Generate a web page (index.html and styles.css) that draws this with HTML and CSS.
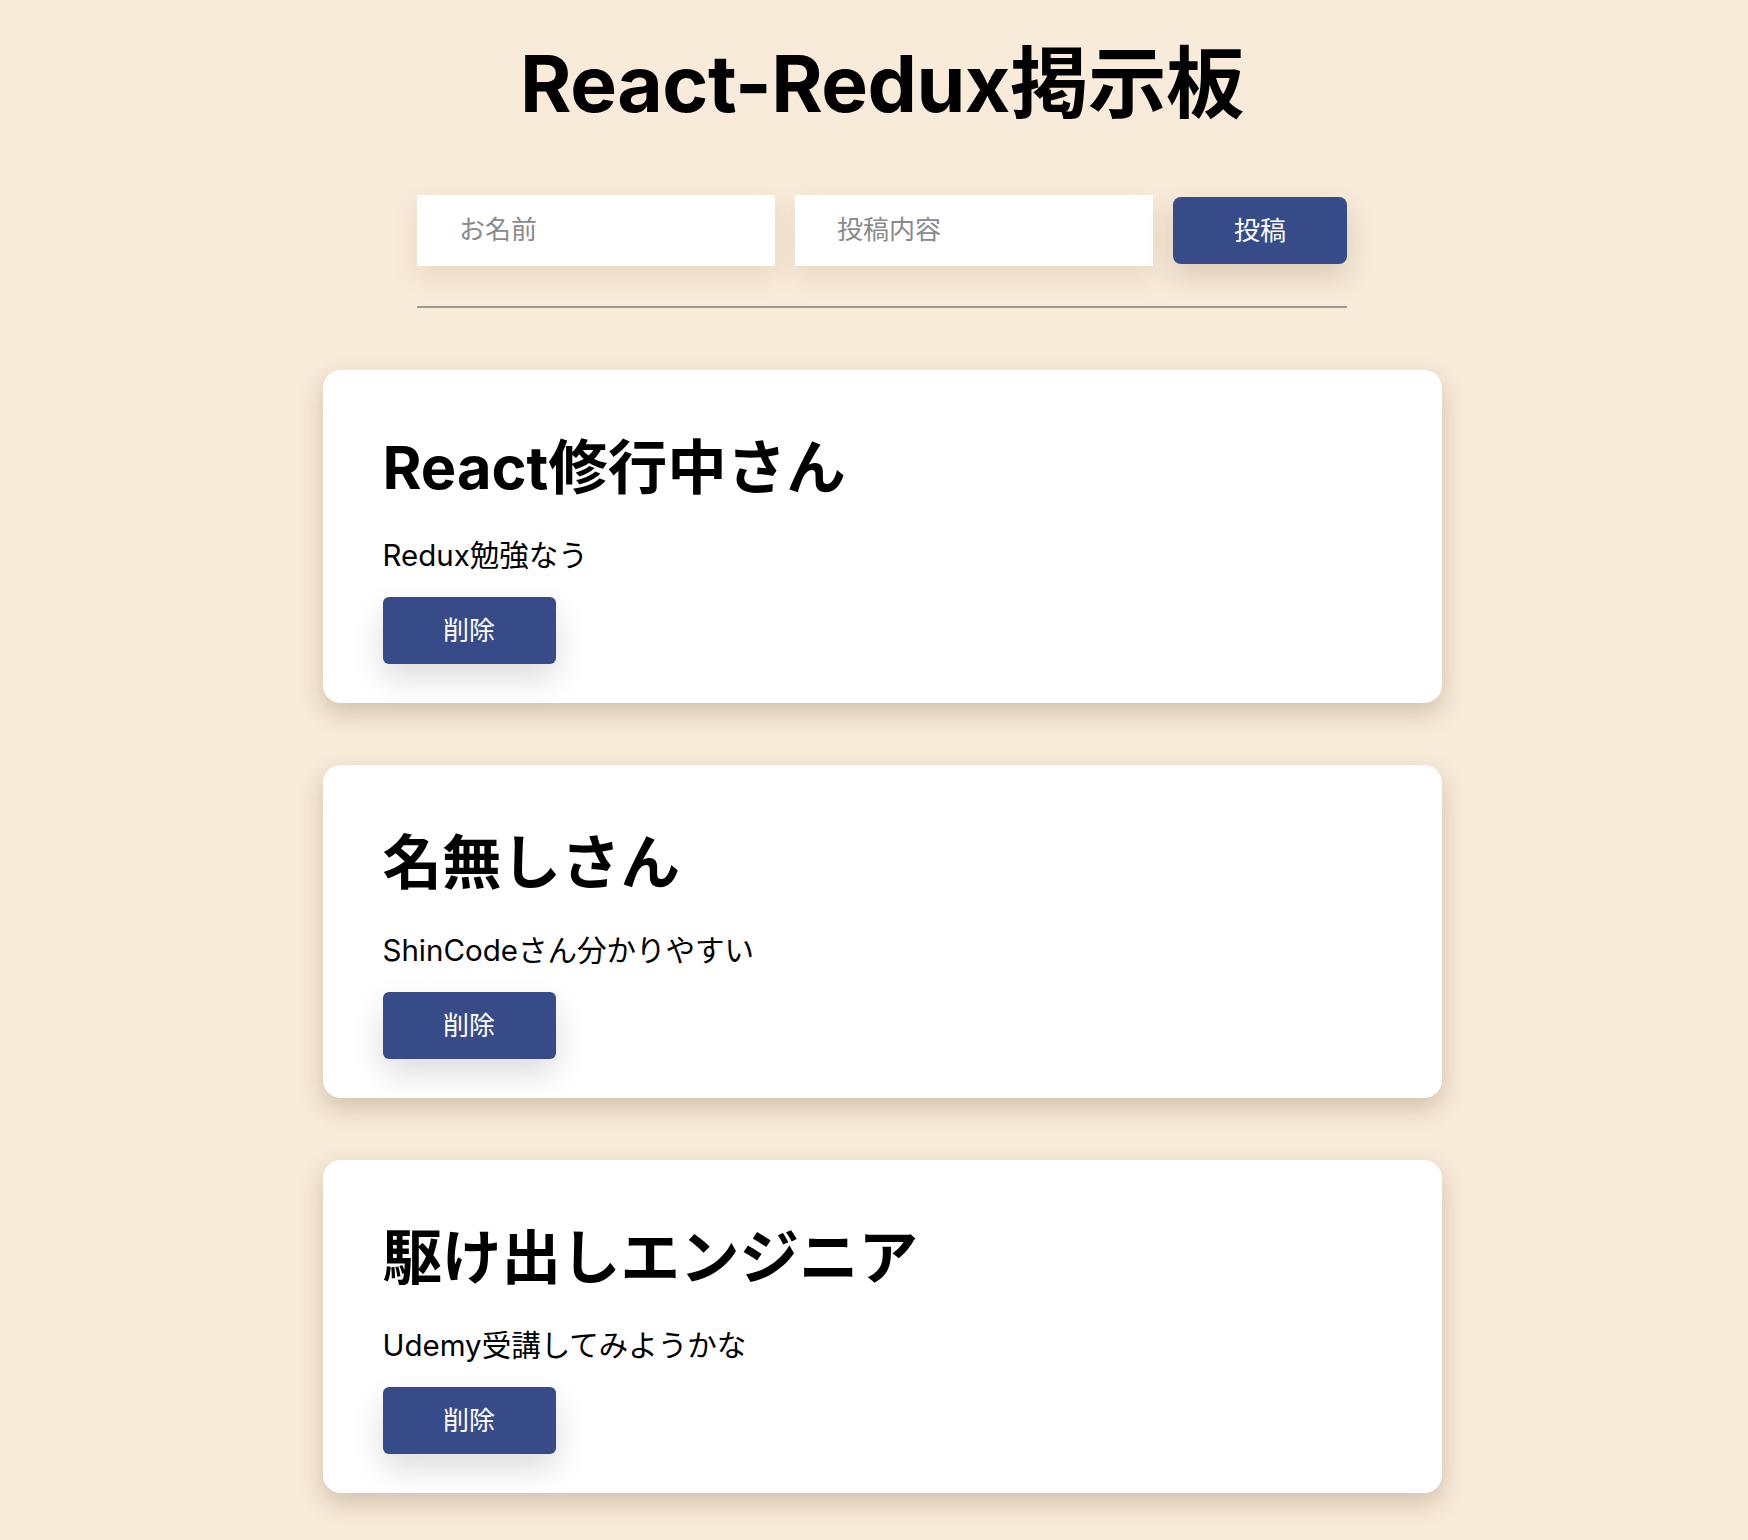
FILE: index.html
```html
<!DOCTYPE html>
<html lang="ja">
<head>
<meta charset="utf-8">
<title>React-Redux掲示板</title>
<link rel="stylesheet" href="styles.css">
</head>
<body>
<div class="page">
  <h1 class="title">React-Redux掲示板</h1>
  <form class="post-form">
    <input class="field" type="text" placeholder="お名前">
    <input class="field" type="text" placeholder="投稿内容">
    <button class="btn btn-post" type="button">投稿</button>
  </form>
  <hr class="divider">
  <div class="posts">
    <div class="card">
      <h2 class="card-name">React修行中さん</h2>
      <p class="card-text">Redux勉強なう</p>
      <button class="btn btn-delete" type="button">削除</button>
    </div>
    <div class="card">
      <h2 class="card-name">名無しさん</h2>
      <p class="card-text">ShinCodeさん分かりやすい</p>
      <button class="btn btn-delete" type="button">削除</button>
    </div>
    <div class="card">
      <h2 class="card-name">駆け出しエンジニア</h2>
      <p class="card-text">Udemy受講してみようかな</p>
      <button class="btn btn-delete" type="button">削除</button>
    </div>
  </div>
</div>
</body>
</html>
```
FILE: styles.css
```css
html, body {
  margin: 0;
  padding: 0;
  background: #f8ebd9;
}
body {
  font-family: Inter, "Noto Sans CJK JP", sans-serif;
  color: #000;
}
.page {
  padding-left: 16px;
  display: flex;
  flex-direction: column;
  align-items: center;
  padding-top: 36px;
  padding-bottom: 40px;
}
.title {
  margin: 0;
  font-size: 78.5px;
  font-weight: 700;
  line-height: 95px;
  letter-spacing: -0.5px;
}
.post-form {
  margin-top: 64px;
  width: 930px;
  display: flex;
  align-items: center;
  gap: 20px;
}
.field {
  width: 358px;
  height: 71px;
  box-sizing: border-box;
  border: none;
  outline: none;
  background: #fff;
  padding: 0 42px 6px;
  font-family: "Noto Sans CJK JP", sans-serif;
  font-size: 26px;
  color: #333;
  box-shadow: 0 10px 26px rgba(120, 90, 50, 0.13);
}
.field::placeholder {
  color: #8a8a8a;
}
.btn {
  border: none;
  background: #384b89;
  color: #fff;
  font-family: "Noto Sans CJK JP", sans-serif;
  font-size: 26px;
  font-weight: 400;
  padding: 0 0 5px;
  cursor: pointer;
}
.btn-post {
  width: 174px;
  height: 67px;
  border-radius: 8px;
  box-shadow: 0 12px 28px rgba(100, 70, 40, 0.2);
}
.divider {
  width: 930px;
  margin: 40px 0 0;
  border: none;
  height: 2px;
  background: #999;
}
.posts {
  margin-top: 62px;
  display: flex;
  flex-direction: column;
  gap: 62px;
}
.card {
  width: 1119px;
  box-sizing: border-box;
  background: #fff;
  border-radius: 18px;
  padding: 62px 60px 39px;
  box-shadow: 0 10px 24px rgba(90, 60, 30, 0.24);
  display: flex;
  flex-direction: column;
  align-items: flex-start;
}
.card-name {
  margin: 0;
  font-size: 59.5px;
  font-weight: 700;
  line-height: 70px;
}
.card-text {
  margin: 36px 0 0;
  font-size: 29.5px;
  line-height: 34px;
}
.btn-delete {
  margin-top: 25px;
  width: 173px;
  height: 67px;
  border-radius: 6px;
  box-shadow: 0 14px 32px rgba(0, 0, 0, 0.14);
}
```
